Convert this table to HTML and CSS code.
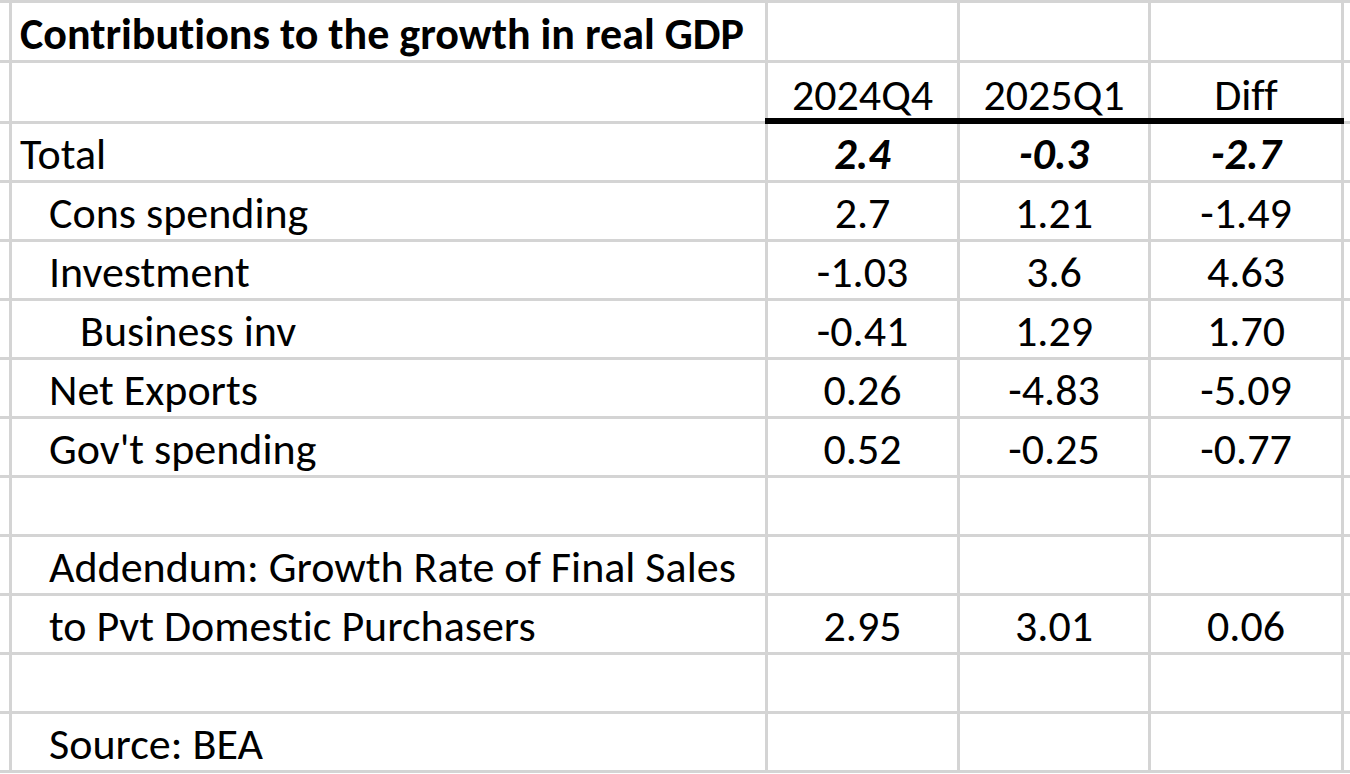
FILE: index.html
```html
<!DOCTYPE html>
<html>
<head>
<meta charset="utf-8">
<link rel="stylesheet" href="styles.css">
</head>
<body>
<div class="sheet">
  <div class="c"></div><div class="c title">Contributions to the growth in real GDP</div><div class="c"></div><div class="c"></div><div class="c"></div><div class="c"></div>
  <div class="c"></div><div class="c"></div><div class="c num hd">2024Q4</div><div class="c num hd">2025Q1</div><div class="c num hd">Diff</div><div class="c"></div>
  <div class="c"></div><div class="c lbl">Total</div><div class="c num tot">2.4</div><div class="c num tot">-0.3</div><div class="c num tot">-2.7</div><div class="c"></div>
  <div class="c"></div><div class="c lbl in1">Cons spending</div><div class="c num">2.7</div><div class="c num">1.21</div><div class="c num">-1.49</div><div class="c"></div>
  <div class="c"></div><div class="c lbl in1">Investment</div><div class="c num">-1.03</div><div class="c num">3.6</div><div class="c num">4.63</div><div class="c"></div>
  <div class="c"></div><div class="c lbl in2">Business inv</div><div class="c num">-0.41</div><div class="c num">1.29</div><div class="c num">1.70</div><div class="c"></div>
  <div class="c"></div><div class="c lbl in1">Net Exports</div><div class="c num">0.26</div><div class="c num">-4.83</div><div class="c num">-5.09</div><div class="c"></div>
  <div class="c"></div><div class="c lbl in1">Gov't spending</div><div class="c num">0.52</div><div class="c num">-0.25</div><div class="c num">-0.77</div><div class="c"></div>
  <div class="c"></div><div class="c"></div><div class="c"></div><div class="c"></div><div class="c"></div><div class="c"></div>
  <div class="c"></div><div class="c lbl in1">Addendum: Growth Rate of Final Sales</div><div class="c"></div><div class="c"></div><div class="c"></div><div class="c"></div>
  <div class="c"></div><div class="c lbl in1">to Pvt Domestic Purchasers</div><div class="c num">2.95</div><div class="c num">3.01</div><div class="c num">0.06</div><div class="c"></div>
  <div class="c"></div><div class="c"></div><div class="c"></div><div class="c"></div><div class="c"></div><div class="c"></div>
  <div class="c"></div><div class="c lbl in1">Source: BEA</div><div class="c"></div><div class="c"></div><div class="c"></div><div class="c"></div>
</div>
</body>
</html>
```
FILE: styles.css
```css
html, body {
  margin: 0;
  padding: 0;
  background: #ffffff;
}
.sheet {
  width: 1350px;
  height: 773px;
  overflow: hidden;
  box-sizing: border-box;
  padding-top: 3px;
  background: #d4d4d4;
  display: grid;
  grid-template-columns: 9px 753px 189px 188px 190px 1fr;
  grid-template-rows: 57px 58px repeat(11, 56px);
  gap: 3px;
  font-family: Carlito, Calibri, Lato, "Noto Sans", sans-serif;
  font-size: 44px;
  font-variant-ligatures: none;
  color: #000;
}
.c {
  background: #fff;
  display: flex;
  align-items: flex-end;
  white-space: nowrap;
  line-height: 44px;
  padding-bottom: 4px;
  box-sizing: border-box;
  position: relative;
  overflow: visible;
}
.title {
  font-weight: bold;
  padding-left: 8px;
}
.lbl {
  padding-left: 8px;
}
.in1 {
  padding-left: 37px;
}
.in2 {
  padding-left: 68px;
}
.num {
  justify-content: center;
}
.tot {
  font-weight: bold;
  font-style: italic;
}
.hd::after {
  content: "";
  position: absolute;
  left: -3px;
  right: -3px;
  bottom: -3px;
  height: 6px;
  background: #000;
}
```
